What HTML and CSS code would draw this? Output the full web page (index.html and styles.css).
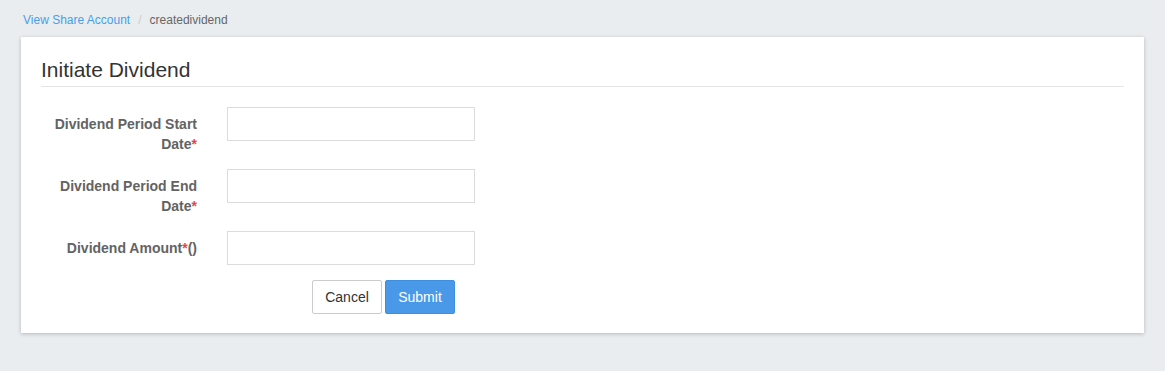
FILE: index.html
```html
<!DOCTYPE html>
<html lang="en">
<head>
  <meta charset="UTF-8">
  <meta name="viewport" content="width=device-width, initial-scale=1.0">
  <title>Initiate Dividend</title>
  <link rel="stylesheet" href="styles.css">
</head>
<body>

  <!-- Breadcrumb -->
  <ul class="breadcrumb">
    <li><a href="#">View Share Account</a></li>
    <li class="active">createdividend</li>
  </ul>

  <!-- Dividend Form Card -->
  <div class="card">
    <h3 class="card-title">Initiate Dividend</h3>

    <form class="form-horizontal">
      <div class="form-group">
        <label class="control-label" for="startDate">Dividend Period Start Date<span class="required">*</span></label>
        <input class="form-control" id="startDate" type="text">
      </div>
      <div class="form-group">
        <label class="control-label" for="endDate">Dividend Period End Date<span class="required">*</span></label>
        <input class="form-control" id="endDate" type="text">
      </div>
      <div class="form-group">
        <label class="control-label" for="amount">Dividend Amount<span class="required">*</span>()</label>
        <input class="form-control" id="amount" type="text">
      </div>

      <div class="form-actions">
        <button type="button" class="btn btn-default">Cancel</button>
        <button type="submit" class="btn btn-primary">Submit</button>
      </div>
    </form>
  </div>

</body>
</html>
```

FILE: styles.css
```css
* {
  box-sizing: border-box;
  margin: 0;
  padding: 0;
}

body {
  padding: 12px 21px;
  font-family: "Liberation Sans", Arial, sans-serif;
  font-size: 14px;
  color: #333;
  background-color: #e9edf0;
}

/* Breadcrumb */
.breadcrumb {
  display: flex;
  list-style: none;
  padding: 0 2px;
  margin-bottom: 8px;
  font-size: 12px;
  line-height: 17px;
}

.breadcrumb a {
  color: #4a9ee8;
  text-decoration: none;
}

.breadcrumb li + li::before {
  content: "/";
  padding: 0 8px;
  color: #ccc;
}

.breadcrumb .active {
  color: #666;
}

/* Card */
.card {
  background-color: #fff;
  padding: 21px 20px 19px;
  box-shadow: 0 1px 4px rgba(0, 0, 0, 0.22);
}

.card-title {
  font-size: 21px;
  font-weight: normal;
  line-height: 24px;
  color: #333;
  padding-bottom: 4px;
  border-bottom: 1px solid #e5e5e5;
  margin-bottom: 20px;
}

/* Form */
.form-group {
  display: grid;
  grid-template-columns: 156px 248px;
  column-gap: 30px;
  align-items: start;
  margin-bottom: 15px;
}

.control-label {
  padding-top: 7px;
  text-align: right;
  font-weight: bold;
  line-height: 20px;
  color: #636363;
}

.required {
  color: #e04848;
}

.form-control {
  height: 34px;
  width: 248px;
  border: 1px solid #dcdcdc;
  padding: 6px 12px;
  font-family: inherit;
  font-size: 14px;
}

.form-actions {
  display: flex;
  gap: 3px;
  padding-left: 271px;
}

.btn {
  height: 34px;
  width: 70px;
  font-family: inherit;
  font-size: 14px;
  border-radius: 2px;
  cursor: pointer;
}

.btn-default {
  background-color: #fff;
  border: 1px solid #ccc;
  color: #333;
}

.btn-primary {
  background-color: #4a99e8;
  border: 1px solid #3f8fe0;
  color: #fff;
}
```
